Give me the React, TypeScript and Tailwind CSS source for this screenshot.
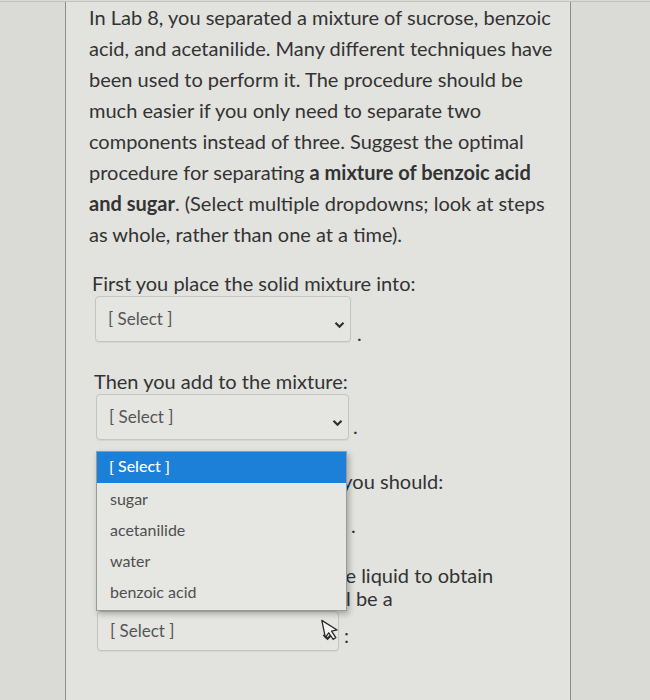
import type { ReactNode } from 'react'

const options = ['sugar', 'acetanilide', 'water', 'benzoic acid']

function Chevron() {
  return (
    <svg width="11" height="8" viewBox="0 0 11 8" className="translate-y-[6px]">
      <path d="M1.5 1.8 L5.5 5.8 L9.5 1.8" fill="none" stroke="#2f2f2f" strokeWidth="2.2" />
    </svg>
  )
}

function SelectBox({ className, children }: { className: string; children?: ReactNode }) {
  return (
    <div
      className={`relative flex items-center justify-between rounded-[4px] border border-[#c4c4c1] bg-[#e5e5e2] pl-[12px] pr-[5px] shadow-[0_1px_1px_rgba(0,0,0,0.06)] ${className}`}
    >
      <span className="text-[17px] text-[#555]">[ Select ]</span>
      <Chevron />
      {children}
    </div>
  )
}

function Cursor() {
  return (
    <svg width="20" height="26" viewBox="0 0 20 26" className="absolute left-[224px] top-[5px] rotate-[-12deg]">
      <path
        d="M2 1.5 L2 19 L6.2 15 L9.2 22.5 L12.2 21.2 L9.3 14 L15 14 Z"
        fill="#f4f4f2"
        stroke="#2a2a2a"
        strokeWidth="1.3"
        strokeLinejoin="round"
      />
    </svg>
  )
}

export default function App() {
  return (
    <div className="h-[700px] w-[650px] overflow-hidden bg-[#dadad7] font-['Lato',sans-serif]">
      <div className="h-[2px] border-b border-[#c2c2bf]" />
      <div className="ml-[65px] h-[698px] w-[506px] border-l border-r border-l-[#8c8c8a] border-r-[#8c8c8a] bg-[#e2e2df] pl-[23px] text-[20px] text-[#333]">
        <p className="whitespace-nowrap leading-[31px]">
          In Lab 8, you separated a mixture of sucrose, benzoic
          <br />
          acid, and acetanilide. Many different techniques have
          <br />
          been used to perform it. The procedure should be
          <br />
          much easier if you only need to separate two
          <br />
          components instead of three. Suggest the optimal
          <br />
          procedure for separating <b className="font-bold">a mixture of benzoic acid</b>
          <br />
          <b className="font-bold">and sugar</b>. (Select multiple dropdowns; look at steps
          <br />
          as whole, rather than one at a time).
        </p>

        <p className="ml-[3px] mt-[19px] leading-[28px]">First you place the solid mixture into:</p>
        <div className="ml-[6px] mt-[-1px] flex items-end">
          <SelectBox className="h-[46px] w-[256px]" />
          <span className="mb-[-3px] ml-[6px] leading-[24px]">.</span>
        </div>

        <p className="ml-[5px] mt-[25px] leading-[28px]">Then you add to the mixture:</p>
        <div className="ml-[7px] mt-[-1px] flex items-end">
          <SelectBox className="h-[46px] w-[253px]">
            <ul className="absolute left-[-1px] top-[56px] z-10 w-[251px] border border-[#9a9a98] bg-[#e6e6e3] pb-[3px] text-[16px] text-[#4f4f4f] shadow-[2px_3px_6px_rgba(0,0,0,0.28)]">
              <li className="flex h-[31px] items-center bg-[#1c80d8] pb-[3px] pl-[12px] font-medium text-white">
                [ Select ]
              </li>
              {options.map((option) => (
                <li key={option} className="flex h-[31px] items-center pl-[13px]">
                  {option}
                </li>
              ))}
            </ul>
          </SelectBox>
          <span className="mb-[2px] ml-[4px] leading-[24px]">.</span>
        </div>

        <p className="ml-[9px] mt-[27px] whitespace-nowrap leading-[28px]">After the sugar is dissolved, you should:</p>
        <div className="ml-[8px] mt-[-1px] flex items-end">
          <SelectBox className="h-[40px] w-[250px]" />
          <span className="mb-[-3px] ml-[4px] leading-[24px]">.</span>
        </div>

        <p className="ml-[13px] mt-[30px] whitespace-nowrap leading-[23px]">
          Then you should filter off the liquid to obtain
          <br />
          <span className="ml-[5px]">the purified solid, which will be a</span>
        </p>
        <div className="ml-[8px] mt-[1px] flex items-end">
          <SelectBox className="h-[40px] w-[242px]">
            <Cursor />
          </SelectBox>
          <span className="mb-[4px] ml-[5px] leading-[24px]">:</span>
        </div>
      </div>
    </div>
  )
}
